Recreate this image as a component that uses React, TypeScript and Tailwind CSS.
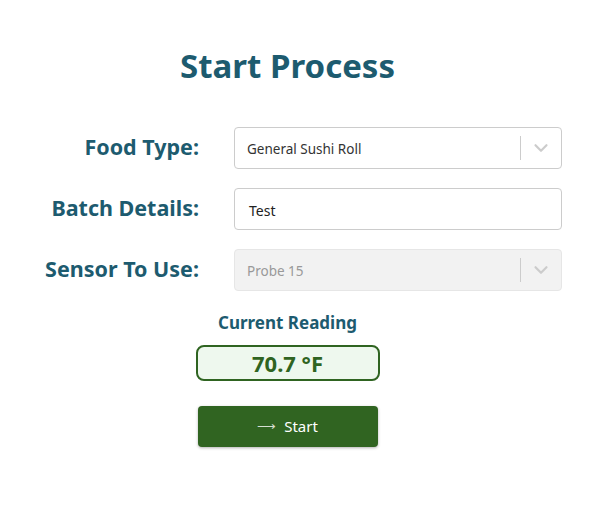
import { ChevronDown } from "lucide-react";

const labelClass =
  "w-[199px] shrink-0 pb-[2px] text-right text-[21.5px] font-bold text-[#1d5b6f]";

function SelectBox({ value, disabled }: { value: string; disabled?: boolean }) {
  return (
    <div
      className={
        disabled
          ? "flex h-[42px] w-[328px] items-center rounded-[4px] border border-[#e6e6e6] bg-[#f2f2f2]"
          : "flex h-[42px] w-[328px] items-center rounded-[4px] border border-[#cccccc] bg-white"
      }
    >
      <span
        className={
          disabled
            ? "flex-1 pl-[12px] pt-[2px] text-[13.5px] text-[#999999]"
            : "flex-1 pl-[12px] pt-[2px] text-[13.5px] text-[#333333]"
        }
      >
        {value}
      </span>
      <span className="h-[24px] w-px bg-[#cccccc]" />
      <div className="flex w-[40px] items-center justify-center">
        <ChevronDown size={22} strokeWidth={2.4} className="text-[#cccccc]" />
      </div>
    </div>
  );
}

export default function App() {
  return (
    <div
      className="min-h-[507px] w-[575px] bg-white pt-[38px]"
      style={{ fontFamily: '"Noto Sans", "Open Sans", sans-serif' }}
    >
      <h1 className="text-center text-[33px] font-bold leading-[56px] text-[#1d5b6f]">
        Start Process
      </h1>

      <div className="mt-[33px] flex flex-col gap-[19px]">
        <div className="flex items-center gap-[35px]">
          <label className={labelClass}>Food Type:</label>
          <SelectBox value="General Sushi Roll" />
        </div>
        <div className="flex items-center gap-[35px]">
          <label className={labelClass}>Batch Details:</label>
          <div className="flex h-[42px] w-[328px] items-center rounded-[4px] border border-[#cccccc] bg-white pl-[14px] pt-[2px] text-[14px] text-[#222222]">
            Test
          </div>
        </div>
        <div className="flex items-center gap-[35px]">
          <label className={labelClass}>Sensor To Use:</label>
          <SelectBox value="Probe 15" disabled />
        </div>
      </div>

      <div className="mt-[20px] flex flex-col items-center">
        <div className="text-[17px] font-bold leading-[24px] text-[#1d5b6f]">
          Current Reading
        </div>
        <div className="mt-[10px] flex h-[36px] w-[184px] items-center justify-center rounded-[8px] border-2 border-[#2f6421] bg-[#eef8ee] text-[22px] font-bold text-[#2f6421]">
          70.7 °F
        </div>
        <button className="mt-[25px] flex h-[41px] w-[180px] items-center justify-center gap-[8px] rounded-[4px] bg-[#306421] text-[15px] text-white shadow-[0_1px_3px_rgba(0,0,0,0.3)]">
          <span className="text-[13px] text-[#d6dfd2]">⟶</span>
          <span>Start</span>
        </button>
      </div>
    </div>
  );
}
